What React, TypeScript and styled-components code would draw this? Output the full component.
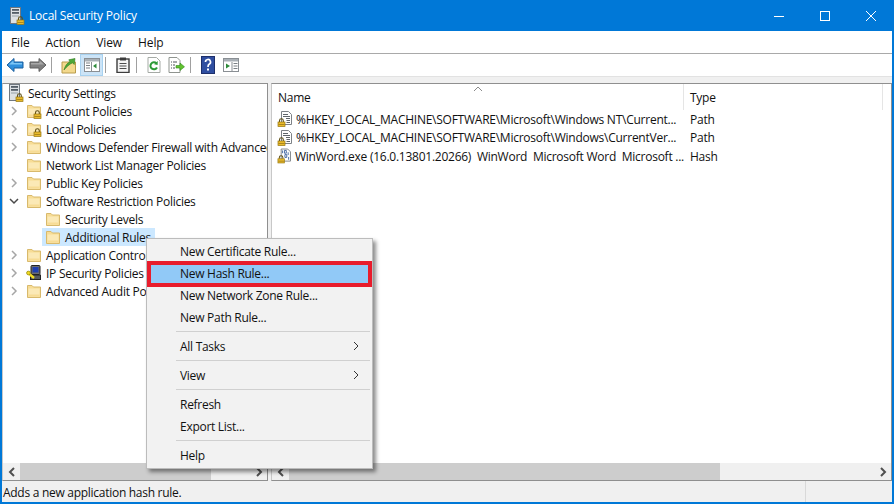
import React from 'react';
import styled, { createGlobalStyle } from 'styled-components';

const GlobalStyle = createGlobalStyle`
  html, body {
    margin: 0;
    padding: 0;
    background: #fff;
  }
  body {
    font-family: 'Open Sans', 'Noto Sans', 'Liberation Sans', sans-serif;
    font-size: 12px;
    color: #111;
  }
  * {
    box-sizing: border-box;
  }
`;

const Window = styled.div`
  position: relative;
  width: 894px;
  height: 504px;
  display: flex;
  flex-direction: column;
  overflow: hidden;
  background: #f0f0f0;
  border: solid #0078d7;
  border-width: 0 2px 2px;
`;

const TitleBar = styled.div`
  height: 31px;
  margin: 0 -2px;
  padding-left: 9px;
  display: flex;
  align-items: center;
  flex-shrink: 0;
  background: #0078d7;
  color: #fff;
`;

const TitleText = styled.span`
  margin-left: 4px;
  flex: 1;
  letter-spacing: -0.2px;
`;

const CaptionButton = styled.div`
  width: 46px;
  height: 31px;
  display: flex;
  align-items: center;
  justify-content: center;
`;

const MenuBar = styled.div`
  height: 23px;
  padding-left: 1px;
  display: flex;
  align-items: center;
  flex-shrink: 0;
  background: #fff;
  border-bottom: 1px solid #a9a9a9;
`;

const MenuBarItem = styled.span`
  padding: 0 8px;
  letter-spacing: -0.1px;
`;

const Toolbar = styled.div`
  height: 22px;
  padding-left: 1px;
  display: flex;
  align-items: stretch;
  flex-shrink: 0;
  background: #fff;
`;

const ToolButton = styled.div<{ $active?: boolean }>`
  width: 23px;
  display: flex;
  align-items: center;
  justify-content: center;
  background: ${p => (p.$active ? '#cce4f7' : 'transparent')};
  border: 1px solid ${p => (p.$active ? '#a8d2f0' : 'transparent')};
`;

const ToolSeparator = styled.div`
  width: 1px;
  margin: 3px 5px 3px 2px;
  background: #a0a0a0;
`;

const Band = styled.div`
  height: 7px;
  flex-shrink: 0;
  background: #f0f0f0;
  border-top: 1px solid #e2e2e2;
`;

const Panes = styled.div`
  flex: 1;
  min-height: 0;
  display: flex;
  gap: 3px;
  background: #f0f0f0;
`;

const Pane = styled.div<{ $width?: number }>`
  ${p => (p.$width ? `width: ${p.$width}px;` : 'flex: 1;')}
  min-width: 0;
  display: flex;
  flex-direction: column;
  background: #fff;
  border: 1px solid #8f8f8f;
  border-left-color: #c8c8c8;
`;

const Tree = styled.div`
  flex: 1;
  min-height: 0;
  overflow: hidden;
`;

const TreeRow = styled.div<{ $level: number }>`
  height: 18px;
  display: flex;
  align-items: center;
  white-space: nowrap;
  padding-left: ${p => (p.$level === 0 ? 2 : (p.$level - 1) * 19 + 1)}px;
`;

const Expander = styled.div<{ $level: number }>`
  width: ${p => (p.$level === 0 ? 0 : 19)}px;
  display: flex;
  justify-content: center;
  flex-shrink: 0;
`;

const TreeEntry = styled.div<{ $selected?: boolean }>`
  height: 18px;
  padding: 0 4px 0 3px;
  display: flex;
  align-items: center;
  gap: 4px;
  background: ${p => (p.$selected ? '#cce8ff' : 'transparent')};
  letter-spacing: -0.27px;
`;

const Scrollbar = styled.div`
  height: 17px;
  display: flex;
  flex-shrink: 0;
  background: #f0f0f0;
`;

const ScrollArrow = styled.div`
  width: 17px;
  display: flex;
  align-items: center;
  justify-content: center;
  flex-shrink: 0;
`;

const ScrollTrack = styled.div`
  flex: 1;
  min-width: 0;
`;

const ScrollThumb = styled.div<{ $width: number }>`
  width: ${p => p.$width}px;
  height: 100%;
  background: #cdcdcd;
`;

const ListHeader = styled.div`
  height: 26px;
  display: flex;
  flex-shrink: 0;
`;

const HeaderCell = styled.div<{ $width: number }>`
  position: relative;
  width: ${p => p.$width}px;
  padding-left: 6px;
  display: flex;
  align-items: center;
  flex-shrink: 0;
  border-right: 1px solid #e5e5e5;
  letter-spacing: -0.25px;
`;

const SortMark = styled.div`
  position: absolute;
  top: -3px;
  left: 201px;
`;

const List = styled.div`
  flex: 1;
  min-height: 0;
  overflow: hidden;
`;

const ListRow = styled.div`
  height: 18.5px;
  display: flex;
  align-items: center;
  white-space: pre;
`;

const NameCell = styled.div`
  width: 412px;
  padding-left: 5px;
  display: flex;
  align-items: center;
  gap: 3px;
  flex-shrink: 0;
  overflow: hidden;
  letter-spacing: -0.25px;
`;

const TypeCell = styled.div`
  padding-left: 6px;
  letter-spacing: -0.25px;
`;

const StatusBar = styled.div`
  height: 21px;
  display: flex;
  flex-shrink: 0;
  background: #f0f0f0;
`;

const StatusText = styled.div`
  width: 804px;
  padding: 2px 0 0 1px;
  display: flex;
  align-items: center;
  border-right: 1px solid #d9d9d9;
  letter-spacing: -0.28px;
`;

const ContextMenu = styled.div`
  position: absolute;
  left: 144px;
  top: 238px;
  width: 227px;
  height: 231px;
  padding: 1px 0;
  background: #f2f2f2;
  border: 1px solid #bcbcbc;
  box-shadow: 3px 3px 4px rgba(0, 0, 0, 0.45);
`;

const MenuItem = styled.div<{ $marked?: boolean }>`
  position: relative;
  height: 22px;
  padding: 0 11px 0 33px;
  display: flex;
  align-items: center;
  justify-content: space-between;
  letter-spacing: -0.28px;
  background: ${p => (p.$marked ? '#91c9f7' : 'transparent')};

  ${p =>
    p.$marked
      ? `&::after {
          content: '';
          position: absolute;
          inset: -1px 0 -3px 0;
          border: 4px solid #e81c2c;
        }`
      : ''}
`;

const MenuSeparator = styled.div`
  height: 7px;
  margin: 0 2px 0 29px;
  display: flex;
  align-items: center;

  &::before {
    content: '';
    flex: 1;
    height: 1px;
    background: #d0d0d0;
  }
`;

const Chevron = ({ dir, color = '#a6a6a6', width = 1.5 }: { dir: 'left' | 'right' | 'down' | 'up'; color?: string; width?: number }) => {
  const points = {
    right: '3,1 7,5 3,9',
    left: '7,1 3,5 7,9',
    down: '1,3 5,7 9,3',
    up: '1,7 5,3 9,7',
  }[dir];
  return (
    <svg width="10" height="10" viewBox="0 0 10 10">
      <polyline points={points} fill="none" stroke={color} strokeWidth={width} />
    </svg>
  );
};

const Lock = ({ x = 8, y = 8 }: { x?: number; y?: number }) => (
  <g transform={`translate(${x} ${y})`}>
    <path d="M2 3.500V2.200a1.900 1.900 0 0 1 3.800 0V3.500" fill="none" stroke="#5e4e14" strokeWidth="1.100" />
    <rect x="0.500" y="3.500" width="7" height="4.500" fill="#eabb2c" stroke="#94750f" strokeWidth="0.700" />
    <rect x="0.900" y="5.600" width="6.200" height="0.900" fill="#a8831a" />
  </g>
);

const FolderIcon = ({ locked }: { locked?: boolean }) => (
  <svg width="16" height="16" viewBox="0 0 16 16">
    <path d="M1.500 2.500h4.500l1.500 1.500h7v10.500h-13z" fill="#f7dc95" stroke="#d8b96c" />
    <rect x="2.500" y="5.500" width="11" height="8" fill="#fbe9b6" />
    <rect x="2.500" y="11.500" width="11" height="2" fill="#f7dc95" />
    {locked && <Lock x={7.500} y={7.500} />}
  </svg>
);

const ServerIcon = () => (
  <svg width="16" height="18" viewBox="0 0 16 18">
    <rect x="1.500" y="0.500" width="10" height="16" fill="#dde1e4" stroke="#707880" />
    <rect x="3" y="2" width="7" height="1.800" fill="#535d66" />
    <rect x="3" y="5" width="7" height="1.800" fill="#535d66" />
    <rect x="3" y="8.500" width="7" height="1" fill="#98a1a8" />
    <Lock x={7.500} y={9.500} />
  </svg>
);

const ComputerIcon = () => (
  <svg width="16" height="16" viewBox="0 0 16 16">
    <rect x="5" y="0.500" width="9" height="9" rx="1" fill="#6d6d6d" stroke="#222" />
    <rect x="6.500" y="2" width="6" height="5.500" fill="#1f3fae" />
    <rect x="4.500" y="10" width="10" height="4.500" fill="#55595c" stroke="#222" />
    <path d="M1 7l7 6" stroke="#f2dc22" strokeWidth="2.400" />
    <circle cx="2.500" cy="8" r="1.900" fill="#f2dc22" stroke="#6b5f00" strokeWidth="0.500" />
  </svg>
);

const RuleIcon = () => (
  <svg width="16" height="16" viewBox="0 0 16 16">
    <path d="M4.500 0.500h7l3 3v10h-10z" fill="#fff" stroke="#7d8287" />
    <path d="M6 3.500h5M6 5.500h7M9 7.500h4M9.500 9.500h3.500M9.500 11.500h3.500" stroke="#5f656b" />
    <Lock x={0.500} y={7.500} />
  </svg>
);

const HashIcon = () => (
  <svg width="16" height="16" viewBox="0 0 16 16">
    <path d="M4.500 0.500h7l3 3v10h-10z" fill="#fff" stroke="#7d8287" />
    <path d="M6 2v3M8 2h2v3H8zM12 4v3M8.500 6.500h2v3h-2zM12.500 9v3" fill="none" stroke="#2f5597" strokeWidth="0.900" />
    <Lock x={0.500} y={7.500} />
  </svg>
);

const ArrowIcon = ({ back }: { back?: boolean }) => (
  <svg width="18" height="16" viewBox="0 0 18 16">
    {back ? (
      <>
        <path d="M1 8l7-6.500V5h9v6H8v3.500z" fill="#2f8fdc" stroke="#1b5f9e" />
        <path d="M3 7.500l4.500-4V6h8.500v1.500z" fill="#7cc6f5" />
      </>
    ) : (
      <>
        <path d="M17 8l-7-6.500V5H1v6h9v3.500z" fill="#808080" stroke="#5f5f5f" />
        <path d="M15 7.500l-4.500-4V6H2v1.500z" fill="#a8a8a8" />
      </>
    )}
  </svg>
);

const UpFolderIcon = () => (
  <svg width="16" height="18" viewBox="0 0 16 18">
    <path d="M1 6h13.500v11H1z" fill="#f3d98d" stroke="#b99c4c" />
    <path d="M3 14c1-4 3-7 6-8.200L7.800 3.800 14 2.500l-.8 6-1.600-1.700C8.500 8 5.500 11 3 14z" fill="#4ea93a" stroke="#2b7a1f" strokeWidth="0.600" />
  </svg>
);

const PaneIcon = ({ side }: { side: 'left' | 'right' }) => (
  <svg width="16" height="14" viewBox="0 0 16 14">
    <rect x="0.500" y="0.500" width="15" height="13" fill="#fff" stroke="#8a8f94" />
    <rect x="1" y="1" width="14" height="2.500" fill="#a9b0b6" />
    {side === 'left' ? (
      <>
        <path d="M2 5h4M2 7.500h4M2 10h4" stroke="#7a8085" strokeWidth="1.200" />
        <path d="M7.500 4v9" stroke="#8a8f94" />
        <path d="M12.500 5.500v5L9 8z" fill="#2e8b3a" />
      </>
    ) : (
      <>
        <path d="M3 5.500v5L7 8z" fill="#2e8b3a" />
        <path d="M9 4v9" stroke="#8a8f94" />
        <path d="M10.500 5.500h4M10.500 8h4M10.500 10.500h4" stroke="#7a8085" strokeWidth="1.200" />
      </>
    )}
  </svg>
);

const ClipboardIcon = () => (
  <svg width="14" height="16" viewBox="0 0 14 16">
    <rect x="1" y="2" width="12" height="13.500" fill="#f4f4f4" stroke="#3c3c3c" strokeWidth="1.400" />
    <rect x="4" y="0.500" width="6" height="3" fill="#3c3c3c" />
    <path d="M3.500 6.500h7M3.500 9h7M3.500 11.500h7" stroke="#4c4c4c" />
  </svg>
);

const RefreshIcon = () => (
  <svg width="14" height="16" viewBox="0 0 14 16">
    <path d="M1 0.500h8.500l3.500 3.500v11.500H1z" fill="#fff" stroke="#a5aaa5" />
    <path d="M10 10.500a3.500 3.500 0 1 1-.6-4.200" fill="none" stroke="#2c9a36" strokeWidth="2" />
    <path d="M10.800 4l-.2 4-3.500-.8z" fill="#2c9a36" />
  </svg>
);

const ExportIcon = () => (
  <svg width="17" height="16" viewBox="0 0 17 16">
    <path d="M1 0.500h8l3 3v12H1z" fill="#fff" stroke="#8f948f" />
    <path d="M3 5h1M5 5h4M3 8h1M5 8h2M3 11h1M5 11h2" stroke="#4c5258" />
    <path d="M8 8.500h4V6l4.500 3.800L12 13.500V11H8z" fill="#62c22f" stroke="#2f8c1c" strokeWidth="0.600" />
  </svg>
);

const HelpIcon = () => (
  <svg width="14" height="18" viewBox="0 0 14 18">
    <rect x="0.500" y="0.500" width="13" height="17" fill="#2f4ea0" stroke="#1d2f6b" />
    <path d="M4.500 6a2.500 2.500 0 1 1 3.600 2.200C7.200 8.800 7 9.400 7 11" fill="none" stroke="#fff" strokeWidth="1.700" />
    <rect x="6" y="12.500" width="2" height="2" fill="#fff" />
  </svg>
);

type TreeNode = {
  label: string;
  level: number;
  icon: 'server' | 'folder' | 'locked' | 'computer';
  expander?: 'right' | 'down';
  selected?: boolean;
};

const treeNodes: TreeNode[] = [
  { label: 'Security Settings', level: 0, icon: 'server' },
  { label: 'Account Policies', level: 1, icon: 'locked', expander: 'right' },
  { label: 'Local Policies', level: 1, icon: 'locked', expander: 'right' },
  { label: 'Windows Defender Firewall with Advanced Security', level: 1, icon: 'folder', expander: 'right' },
  { label: 'Network List Manager Policies', level: 1, icon: 'folder' },
  { label: 'Public Key Policies', level: 1, icon: 'folder', expander: 'right' },
  { label: 'Software Restriction Policies', level: 1, icon: 'folder', expander: 'down' },
  { label: 'Security Levels', level: 2, icon: 'folder' },
  { label: 'Additional Rules', level: 2, icon: 'folder', selected: true },
  { label: 'Application Control Policies', level: 1, icon: 'folder', expander: 'right' },
  { label: 'IP Security Policies on Local Computer', level: 1, icon: 'computer', expander: 'right' },
  { label: 'Advanced Audit Policy Configuration', level: 1, icon: 'folder', expander: 'right' },
];

const treeIcon = (icon: TreeNode['icon']) => {
  if (icon === 'server') return <ServerIcon />;
  if (icon === 'computer') return <ComputerIcon />;
  return <FolderIcon locked={icon === 'locked'} />;
};

const listRows = [
  { name: '%HKEY_LOCAL_MACHINE\\SOFTWARE\\Microsoft\\Windows NT\\Current...', type: 'Path', hash: false },
  { name: '%HKEY_LOCAL_MACHINE\\SOFTWARE\\Microsoft\\Windows\\CurrentVer...', type: 'Path', hash: false },
  { name: 'WinWord.exe (16.0.13801.20266)  WinWord  Microsoft Word  Microsoft ...', type: 'Hash', hash: true },
];

const App: React.FC = () => (
  <Window>
    <GlobalStyle />
    <TitleBar>
      <ServerIcon />
      <TitleText>Local Security Policy</TitleText>
      <CaptionButton>
        <svg width="12" height="12" viewBox="0 0 12 12">
          <path d="M1 6.500h10" stroke="#fff" />
        </svg>
      </CaptionButton>
      <CaptionButton>
        <svg width="12" height="12" viewBox="0 0 12 12">
          <rect x="1.500" y="1.500" width="9" height="9" fill="none" stroke="#fff" />
        </svg>
      </CaptionButton>
      <CaptionButton>
        <svg width="12" height="12" viewBox="0 0 12 12">
          <path d="M1 1l10 10M11 1L1 11" stroke="#fff" />
        </svg>
      </CaptionButton>
    </TitleBar>

    <MenuBar>
      {['File', 'Action', 'View', 'Help'].map(item => (
        <MenuBarItem key={item}>{item}</MenuBarItem>
      ))}
    </MenuBar>

    <Toolbar>
      <ToolButton><ArrowIcon back /></ToolButton>
      <ToolButton><ArrowIcon /></ToolButton>
      <ToolSeparator />
      <ToolButton><UpFolderIcon /></ToolButton>
      <ToolButton $active><PaneIcon side="left" /></ToolButton>
      <ToolSeparator />
      <ToolButton><ClipboardIcon /></ToolButton>
      <ToolSeparator />
      <ToolButton><RefreshIcon /></ToolButton>
      <ToolButton><ExportIcon /></ToolButton>
      <ToolSeparator />
      <ToolButton><HelpIcon /></ToolButton>
      <ToolButton><PaneIcon side="right" /></ToolButton>
    </Toolbar>
    <Band />

    <Panes>
      <Pane $width={266}>
        <Tree>
          {treeNodes.map(node => (
            <TreeRow key={node.label} $level={node.level}>
              <Expander $level={node.level}>
                {node.expander && (
                  <Chevron dir={node.expander} color={node.expander === 'down' ? '#4a4a4a' : '#a6a6a6'} />
                )}
              </Expander>
              <TreeEntry $selected={node.selected}>
                {treeIcon(node.icon)}
                <span>{node.label}</span>
              </TreeEntry>
            </TreeRow>
          ))}
        </Tree>
        <Scrollbar>
          <ScrollArrow><Chevron dir="left" color="#505050" width={2} /></ScrollArrow>
          <ScrollTrack><ScrollThumb $width={191} /></ScrollTrack>
          <ScrollArrow><Chevron dir="right" color="#505050" width={2} /></ScrollArrow>
        </Scrollbar>
      </Pane>

      <Pane>
        <ListHeader>
          <HeaderCell $width={412}>
            Name
            <SortMark><Chevron dir="up" color="#8a8a8a" width={1} /></SortMark>
          </HeaderCell>
          <HeaderCell $width={199}>Type</HeaderCell>
        </ListHeader>
        <List>
          {listRows.map(row => (
            <ListRow key={row.name}>
              <NameCell>
                {row.hash ? <HashIcon /> : <RuleIcon />}
                <span>{row.name}</span>
              </NameCell>
              <TypeCell>{row.type}</TypeCell>
            </ListRow>
          ))}
        </List>
        <Scrollbar>
          <ScrollArrow><Chevron dir="left" color="#505050" width={2} /></ScrollArrow>
          <ScrollTrack><ScrollThumb $width={431} /></ScrollTrack>
          <ScrollArrow><Chevron dir="right" color="#505050" width={2} /></ScrollArrow>
        </Scrollbar>
      </Pane>
    </Panes>

    <StatusBar>
      <StatusText>Adds a new application hash rule.</StatusText>
    </StatusBar>

    <ContextMenu>
      <MenuItem>New Certificate Rule...</MenuItem>
      <MenuItem $marked>New Hash Rule...</MenuItem>
      <MenuItem>New Network Zone Rule...</MenuItem>
      <MenuItem>New Path Rule...</MenuItem>
      <MenuSeparator />
      <MenuItem>All Tasks<Chevron dir="right" color="#333" width={1} /></MenuItem>
      <MenuSeparator />
      <MenuItem>View<Chevron dir="right" color="#333" width={1} /></MenuItem>
      <MenuSeparator />
      <MenuItem>Refresh</MenuItem>
      <MenuItem>Export List...</MenuItem>
      <MenuSeparator />
      <MenuItem>Help</MenuItem>
    </ContextMenu>
  </Window>
);

export default App;
